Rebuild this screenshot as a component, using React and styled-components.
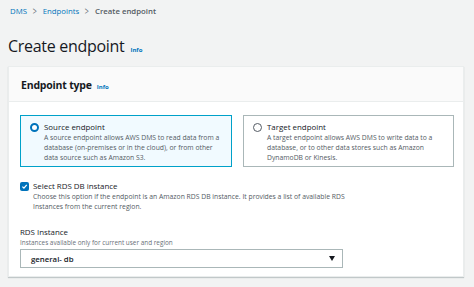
import React from "react"
import styled, { createGlobalStyle } from "styled-components"

const Global = createGlobalStyle`
  html, body { margin: 0; padding: 0; }
  body {
    background: #f2f3f3;
    font-family: "Open Sans", "Noto Sans", sans-serif;
    color: #16191f;
    width: 474px;
    height: 287px;
    overflow: hidden;
  }
`

const Page = styled.div`
  padding: 4px 10px 0 8px;
`

const Crumbs = styled.nav`
  display: flex;
  align-items: center;
  gap: 5px;
  font-size: 7.8px;
  height: 14px;
  padding-left: 2px;
`

const Crumb = styled.span`
  color: ${p => (p.$current ? "#545b64" : "#0073bb")};
  font-weight: ${p => (p.$current ? 600 : 500)};
`

const Chevron = styled.span`
  color: #687078;
  font-size: 10px;
  transform: scaleX(0.7);
`

const TitleRow = styled.div`
  display: flex;
  align-items: baseline;
  gap: 6px;
  margin-top: 17px;
  height: 31px;
`

const Title = styled.h1`
  margin: 0;
  font-size: 16px;
  font-weight: 400;
  letter-spacing: -0.3px;
`

const Info = styled.span`
  color: #0073bb;
  font-size: 6px;
  font-weight: 700;
`

const Card = styled.section`
  background: #fff;
  border: 1px solid #eaeded;
  box-shadow: 0 1px 1px rgba(0, 28, 36, 0.2);
  width: 456px;
  height: 211px;
  box-sizing: border-box;
`

const CardHead = styled.header`
  display: flex;
  align-items: baseline;
  gap: 5px;
  height: 35px;
  padding: 11px 12px 0;
  box-sizing: border-box;
  background: #fafafa;
  border-bottom: 1px solid #eaeded;
`

const CardTitle = styled.h2`
  margin: 0;
  font-size: 10.5px;
  font-weight: 700;
  letter-spacing: -0.2px;
`

const CardBody = styled.div`
  padding: 13px 11px 0 11px;
`

const Tiles = styled.div`
  display: grid;
  grid-template-columns: 212px 211px;
  gap: 11px;
`

const Tile = styled.div`
  display: grid;
  grid-template-columns: 14px 1fr;
  padding: 6px 8px 6px 9px;
  height: 52px;
  box-sizing: border-box;
  border: 1px solid ${p => (p.$selected ? "#00a1c9" : "#aab7b8")};
  background: ${p => (p.$selected ? "#f1faff" : "#fff")};
`

const Radio = styled.span`
  width: 9px;
  height: 9px;
  margin-top: 1px;
  border-radius: 50%;
  box-sizing: border-box;
  border: ${p => (p.$on ? "2.5px solid #0073bb" : "1px solid #545b64")};
  background: #fff;
`

const Label = styled.div`
  font-size: 7.9px;
  font-weight: 500;
  line-height: 11px;
`

const Desc = styled.div`
  font-size: 6.8px;
  line-height: 10px;
  color: #545b64;
`

const CheckRow = styled.div`
  display: grid;
  grid-template-columns: 13px 1fr;
  margin-top: 14px;
`

const Box = styled.span`
  width: 9px;
  height: 9px;
  margin-top: 1px;
  border-radius: 2px;
  background: #0073bb;
  display: flex;
  align-items: center;
  justify-content: center;
`

const Field = styled.div`
  margin-top: 15px;
`

const FieldLabel = styled.div`
  font-size: 7.9px;
  font-weight: 500;
  line-height: 11px;
`

const Hint = styled.div`
  font-size: 6.4px;
  line-height: 9px;
  color: #687078;
  margin-top: 0;
`

const Select = styled.div`
  display: flex;
  align-items: center;
  justify-content: space-between;
  width: 323px;
  height: 19px;
  box-sizing: border-box;
  margin-top: 2px;
  padding: 0 7px 0 10px;
  border: 1px solid #aab7b8;
  font-size: 7.8px;
  font-weight: 600;
`

const Caret = styled.span`
  width: 0;
  height: 0;
  border-left: 3.5px solid transparent;
  border-right: 3.5px solid transparent;
  border-top: 5px solid #16191f;
`

export default function App() {
  return (
    <>
      <Global />
      <Page>
        <Crumbs>
          <Crumb>DMS</Crumb>
          <Chevron>&gt;</Chevron>
          <Crumb>Endpoints</Crumb>
          <Chevron>&gt;</Chevron>
          <Crumb $current>Create endpoint</Crumb>
        </Crumbs>
        <TitleRow>
          <Title>Create endpoint</Title>
          <Info>Info</Info>
        </TitleRow>
        <Card>
          <CardHead>
            <CardTitle>Endpoint type</CardTitle>
            <Info>Info</Info>
          </CardHead>
          <CardBody>
            <Tiles>
              <Tile $selected>
                <Radio $on />
                <div>
                  <Label>Source endpoint</Label>
                  <Desc>
                    A source endpoint allows AWS DMS to read data from a database (on-premises or in the cloud), or from other data source such as Amazon S3.
                  </Desc>
                </div>
              </Tile>
              <Tile>
                <Radio />
                <div>
                  <Label>Target endpoint</Label>
                  <Desc>
                    A target endpoint allows AWS DMS to write data to a database, or to other data stores such as Amazon DynamoDB or Kinesis.
                  </Desc>
                </div>
              </Tile>
            </Tiles>
            <CheckRow>
              <Box>
                <svg width="7" height="7" viewBox="0 0 10 10">
                  <path d="M2 5.2 L4.2 7.4 L8.2 2.8" fill="none" stroke="#fff" strokeWidth="1.8" />
                </svg>
              </Box>
              <div>
                <Label>Select RDS DB instance</Label>
                <Desc>
                  Choose this option if the endpoint is an Amazon RDS DB instance. It provides a list of available RDS
                  <br />
                  Instances from the current region.
                </Desc>
              </div>
            </CheckRow>
            <Field>
              <FieldLabel>RDS Instance</FieldLabel>
              <Hint>Instances available only for current user and region</Hint>
              <Select>
                general- db
                <Caret />
              </Select>
            </Field>
          </CardBody>
        </Card>
      </Page>
    </>
  )
}
